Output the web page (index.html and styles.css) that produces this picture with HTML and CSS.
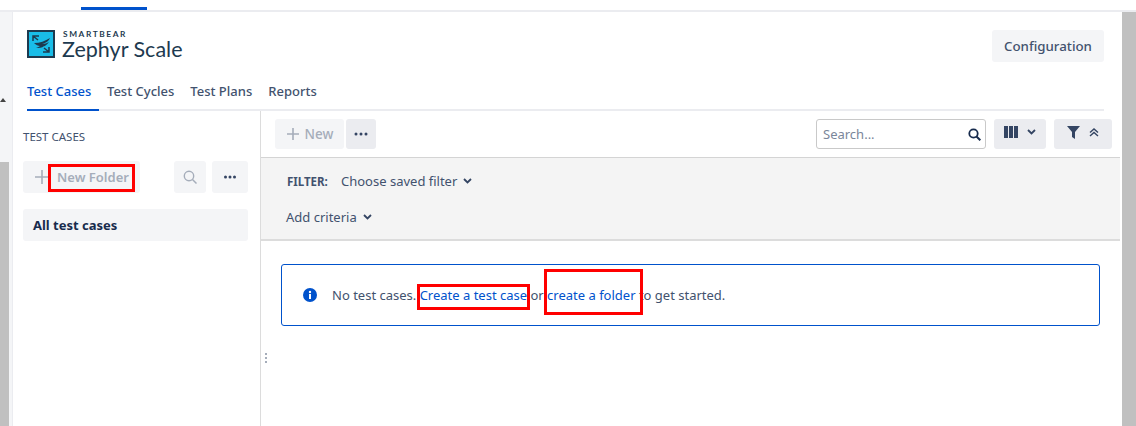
FILE: index.html
```html
<!DOCTYPE html>
<html lang="en">
<head>
<meta charset="utf-8">
<title>Zephyr Scale</title>
<link rel="stylesheet" href="styles.css">
</head>
<body>
<div class="topbar"><span class="topbar-tab"></span></div>
<div class="shell">
  <div class="gutter"><span class="gutter-arrow"></span><span class="gutter-thumb"></span></div>
  <main class="app">
    <header class="head">
      <div class="logo">
        <svg class="logo-mark" width="28" height="28" viewBox="0 0 28 28">
          <rect width="28" height="28" fill="#1d3a4f"/>
          <rect x="2" y="2" width="24" height="24" fill="#19bde8"/>
          <path d="M6 11V6h6M6 6l5 4" fill="none" stroke="#1d3a4f" stroke-width="1.500"/>
          <path d="M7 13c6 0 11-2 16-5-1 3-4 5-8 6 3 0 5-1 7-2-2 3-5 5-9 5 1 0 3 0 4-1-2 2-5 2-8 2 2-1 3-1 4-2-2 0-4-1-6-3z" fill="#1d3a4f"/>
          <path d="M22 17v5h-6M22 22l-5-4" fill="none" stroke="#1d3a4f" stroke-width="1.500"/>
        </svg>
        <div class="logo-text"><span class="logo-top">SMARTBEAR</span><span class="logo-name">Zephyr Scale</span></div>
      </div>
      <button class="btn btn-config">Configuration</button>
    </header>
    <nav class="tabs">
      <a class="tab tab-active">Test Cases</a>
      <a class="tab">Test Cycles</a>
      <a class="tab">Test Plans</a>
      <a class="tab">Reports</a>
    </nav>
    <div class="columns">
      <aside class="side">
        <div class="side-title">TEST CASES</div>
        <div class="side-tools">
          <button class="btn btn-folder">
            <svg width="14" height="14" viewBox="0 0 14 14"><path d="M7 0v14M0 7h14" stroke="#a5adba" stroke-width="1.600"/></svg>
            <span class="marked">New Folder<i class="mark mark-folder"></i></span>
          </button>
          <button class="btn btn-square">
            <svg width="14" height="14" viewBox="0 0 14 14"><circle cx="6" cy="6" r="4.700" fill="none" stroke="#a5adba" stroke-width="1.400"/><path d="M9.500 9.500l4 4" stroke="#a5adba" stroke-width="1.500"/></svg>
          </button>
          <button class="btn btn-square btn-more">
            <svg width="12" height="4" viewBox="0 0 12 4"><g fill="#344563"><circle cx="1.500" cy="2" r="1.500"/><circle cx="6" cy="2" r="1.500"/><circle cx="10.500" cy="2" r="1.500"/></g></svg>
          </button>
        </div>
        <div class="side-item">All test cases</div>
      </aside>
      <section class="content">
        <div class="toolbar">
          <button class="btn btn-new">
            <svg width="12" height="12" viewBox="0 0 12 12"><path d="M6 0v12M0 6h12" stroke="#a5adba" stroke-width="1.600"/></svg>New
          </button>
          <button class="btn btn-dots">
            <svg width="14" height="4" viewBox="0 0 14 4"><g fill="#344563"><circle cx="2" cy="2" r="1.500"/><circle cx="7" cy="2" r="1.500"/><circle cx="12" cy="2" r="1.500"/></g></svg>
          </button>
          <div class="search">
            <span class="search-text">Search...</span>
            <svg width="13" height="13" viewBox="0 0 13 13"><circle cx="5.500" cy="5.500" r="4.200" fill="none" stroke="#172b4d" stroke-width="1.800"/><path d="M8.500 8.500l3.800 3.800" stroke="#172b4d" stroke-width="2"/></svg>
          </div>
          <button class="btn btn-tool btn-cols">
            <svg width="14" height="12" viewBox="0 0 14 12"><path d="M0 0h4v12H0zM5 0h4v12H5zM10 0h4v12h-4z" fill="#344563"/></svg>
            <svg width="9" height="6" viewBox="0 0 9 6"><path d="M1 1l3.500 3.500L8 1" fill="none" stroke="#344563" stroke-width="1.800"/></svg>
          </button>
          <button class="btn btn-tool btn-filter">
            <svg width="13" height="13" viewBox="0 0 13 13"><path d="M0 0h13L8 6v7L5 11V6z" fill="#344563"/></svg>
            <svg width="10" height="9" viewBox="0 0 10 9"><path d="M1 4.500l4-3.500 4 3.500M1 8l4-3.500L9 8" fill="none" stroke="#344563" stroke-width="1.400"/></svg>
          </button>
        </div>
        <div class="filters">
          <div class="filter-row filter-row-saved">
            <strong class="filter-label">FILTER:</strong>
            <span>Choose saved filter</span>
            <svg width="9" height="6" viewBox="0 0 9 6"><path d="M1 1l3.500 3.500L8 1" fill="none" stroke="#344563" stroke-width="1.800"/></svg>
          </div>
          <div class="filter-row filter-row-add">
            <span>Add criteria</span>
            <svg width="9" height="6" viewBox="0 0 9 6"><path d="M1 1l3.500 3.500L8 1" fill="none" stroke="#344563" stroke-width="1.800"/></svg>
          </div>
        </div>
        <div class="notice-wrap">
          <div class="notice">
            <svg width="14" height="14" viewBox="0 0 14 14"><circle cx="7" cy="7" r="7" fill="#0052cc"/><rect x="6" y="6" width="2" height="5" fill="#fff"/><circle cx="7" cy="4" r="1.200" fill="#fff"/></svg>
            <p class="notice-text">No test cases. <a class="link marked">Create a test case<i class="mark mark-case"></i></a> or <a class="link marked">create a folder<i class="mark mark-create"></i></a> to get started.</p>
          </div>
        </div>
        <div class="grip"><i></i><i></i><i></i></div>
      </section>
    </div>
  </main>
  <div class="scrollbar"></div>
</div>
</body>
</html>
```
FILE: styles.css
```css
* { box-sizing: border-box; }
html, body { margin: 0; height: 100%; }
body {
  width: 1136px;
  height: 426px;
  overflow: hidden;
  background: #fff;
  font-family: "Noto Sans", "Open Sans", sans-serif;
  font-size: 13px;
  color: #42526e;
  display: flex;
  flex-direction: column;
}
.topbar { height: 12px; flex: none; border-bottom: 2px solid #ebecf0; padding-left: 81px; }
.topbar-tab { display: block; width: 66px; height: 3px; margin-top: 7px; background: #0052cc; }
.shell { flex: 1; display: flex; min-height: 0; }
.gutter {
  width: 13px; flex: none; background: #f4f5f7; border-right: 1px solid #ebecf0;
  display: flex; flex-direction: column; position: relative;
}
.gutter-arrow {
  width: 0; height: 0; margin: 86px 0 0 0;
  border: 3px solid transparent; border-top: 0; border-bottom: 4px solid #444;
}
.gutter-thumb { position: absolute; left: 0; top: 150px; bottom: 0; width: 9px; background: #c0c0c0; }
.app { flex: 1; min-width: 0; display: flex; flex-direction: column; }
.head { display: flex; justify-content: space-between; padding: 18px 16px 0 14px; height: 68px; flex: none; }
.logo { display: flex; gap: 7px; align-items: flex-start; }
.logo-mark { display: block; }
.logo-text { display: flex; flex-direction: column; }
.logo-top { font-size: 8.300px; line-height: 9px; margin-left: 1px; letter-spacing: 1.600px; color: #1d3a4f; font-family: "Lato", sans-serif; font-weight: 700; }
.logo-name { font-size: 21.500px; line-height: 21px; color: #1d3a4f; font-family: "Lato", sans-serif; }
.btn {
  border: 0; border-radius: 3px; background: #f4f5f7; padding: 0; margin: 0;
  font: inherit; color: #42526e; display: inline-flex; align-items: center; justify-content: center;
}
.btn-config { width: 112px; height: 32px; font-size: 13.300px; font-weight: 500; }
.tabs { display: flex; gap: 16px; margin: 0 16px 0 14px; height: 31px; flex: none; border-bottom: 2px solid #ebecf0; }
.tab { height: 31px; font-size: 13px; font-weight: 500; line-height: 22px; color: #42526e; }
.tab-active { color: #0052cc; border-bottom: 2px solid #0052cc; width: 72px; margin-right: -8px; }
.columns { flex: 1; display: flex; min-height: 0; }
.side { width: 248px; flex: none; padding: 0 12px 0 10px; border-right: 1px solid #dcdcdc; }
.side-title { font-size: 11.500px; line-height: 16px; margin-top: 18px; }
.side-tools { display: flex; margin-top: 16px; }
.btn-folder { width: 117px; height: 32px; justify-content: flex-start; padding-left: 12px; gap: 8px; color: #a5adba; font-weight: 600; }
.btn-square { width: 32px; height: 32px; }
.btn-more { width: 36px; margin-left: 6px; }
.btn-folder + .btn-square { margin-left: 34px; }
.side-item { margin-top: 16px; height: 32px; background: #f4f5f7; border-radius: 3px; padding-left: 10px; font-weight: 700; color: #172b4d; line-height: 32px; }
.content { flex: 1; min-width: 0; position: relative; display: flex; flex-direction: column; }
.toolbar { height: 47px; flex: none; padding: 8px 8px 0 14px; display: flex; align-items: flex-start; border-bottom: 1px solid #d4d4d4; }
.btn-new { width: 69px; height: 30px; gap: 6px; padding-left: 1px; color: #a5adba; font-size: 13.500px; font-weight: 500; }
.btn-dots { width: 30px; height: 30px; margin-left: 2px; background: #ebecf0; margin-right: auto; }
.search {
  width: 170px; height: 30px; border: 1px solid #c9c9c9; border-radius: 3px; background: #fff;
  display: flex; align-items: center; justify-content: space-between; padding: 0 4px 0 6px;
}
.search-text { color: #7a869a; }
.btn-tool { height: 30px; background: #ebecf0; gap: 9px; padding-bottom: 4px; }
.btn-cols { width: 52px; margin-left: 8px; }
.btn-filter { width: 58px; margin-left: 8px; gap: 9px; }
.filters { height: 83px; flex: none; background: #f4f4f4; border-bottom: 2px solid #dcdcdc; padding: 12px 0 0 26px; }
.filter-row { display: flex; align-items: center; height: 22px; }
.filter-row-saved span { margin-right: 6px; }
.filter-row-add { margin-top: 14px; margin-left: -1px; gap: 6px; }
.filter-label { font-size: 11.500px; font-weight: 700; width: 54px; }
.notice-wrap { padding: 23px 20px 0 20px; }
.notice {
  height: 62px; border: 1px solid #0052cc; border-radius: 3px; padding-left: 21px;
  display: flex; align-items: center; gap: 15px;
}
.notice-text { margin: 0; color: #42526e; white-space: nowrap; }
.link { color: #0052cc; }
.marked { position: relative; }
.mark { position: absolute; border: 3px solid #f00; pointer-events: none; }
.mark-folder { left: -9px; right: -6px; top: -4px; height: 28px; }
.mark-case { left: -3px; right: -3px; top: -2px; height: 26px; }
.mark-create { left: -3px; right: -7px; top: -17px; height: 46px; }
.grip { position: absolute; left: 4px; top: 242px; display: flex; flex-direction: column; gap: 2px; }
.grip i { width: 2px; height: 2px; background: #a5adba; }
.scrollbar { width: 14px; flex: none; background: #c0c0c0; margin-left: 2px; }
```
